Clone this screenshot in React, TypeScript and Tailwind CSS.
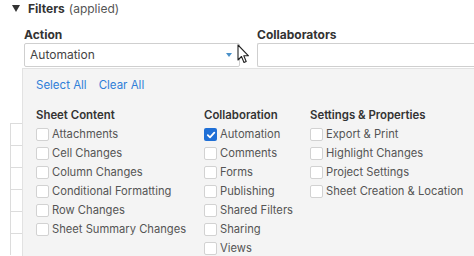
import React from "react";

const col1 = ["Attachments", "Cell Changes", "Column Changes", "Conditional Formatting", "Row Changes", "Sheet Summary Changes"];
const col2 = ["Automation", "Comments", "Forms", "Publishing", "Shared Filters", "Sharing", "Views"];
const col3 = ["Export & Print", "Highlight Changes", "Project Settings", "Sheet Creation & Location"];

function Box({ checked }: { checked?: boolean }) {
  if (checked) {
    return (
      <span className="w-[13px] h-[13px] rounded-[2px] bg-[#1f6fd6] flex items-center justify-center shrink-0">
        <svg width="10" height="10" viewBox="0 0 10 10"><path d="M1.8 5.2 L4 7.3 L8.3 2.6" stroke="white" strokeWidth="1.8" fill="none" strokeLinecap="round" strokeLinejoin="round" /></svg>
      </span>
    );
  }
  return <span className="w-[13px] h-[13px] rounded-[2px] border border-[#d2d2d2] bg-white shrink-0" />;
}

function Column({ title, items, checked = [] as string[], w }: { title: string; items: string[]; checked?: string[]; w: string }) {
  return (
    <div className={`flex flex-col shrink-0 ${w}`}>
      <div className="font-semibold text-[11.4px] text-[#333] h-[20px] leading-[20px]">{title}</div>
      {items.map((it) => (
        <div key={it} className="flex items-center gap-[3px] h-[19px]">
          <Box checked={checked.includes(it)} />
          <span className="text-[11.2px] text-[#555] whitespace-nowrap">{it}</span>
        </div>
      ))}
    </div>
  );
}

export default function App() {
  return (
    <div className="w-[474px] h-[256px] bg-white overflow-hidden relative" style={{ fontFamily: "Inter, 'Noto Sans', sans-serif" }}>
      <div className="flex items-center h-[18px] pl-[12px]">
        <svg width="8" height="7" viewBox="0 0 8 7" className="mt-[-2px]"><path d="M0 0 H8 L4 7 Z" fill="#333" /></svg>
        <span className="ml-[8px] font-bold text-[12px] text-[#333]">Filters</span>
        <span className="ml-[4px] text-[12px] text-[#555]">(applied)</span>
      </div>
      <div className="flex mt-[8px] pl-[24px] gap-[17px]">
        <div className="flex flex-col w-[216px] shrink-0">
          <div className="font-bold text-[12px] text-[#333] h-[17px] leading-[17px]">Action</div>
          <div className="h-[24px] border border-[#cfcfcf] rounded-[2px] flex items-center pl-[5px] pr-[7px] justify-between">
            <span className="text-[12px] text-[#444]">Automation</span>
            <svg width="6" height="4" viewBox="0 0 6 4"><path d="M0 0 H6 L3 4 Z" fill="#4a90c8" /></svg>
          </div>
        </div>
        <div className="flex flex-col flex-1">
          <div className="font-bold text-[12px] text-[#333] h-[17px] leading-[17px]">Collaborators</div>
          <div className="h-[24px] border border-[#cfcfcf] border-r-0 rounded-l-[2px]" />
        </div>
      </div>
      <div className="flex mt-[1px]">
        <div className="w-[22px] shrink-0 pl-[10px] pt-[55px] flex flex-col">
          {[0, 1, 2, 3, 4, 5].map((i) => (
            <div key={i} className="h-[22px] border-l border-t border-[#dcdcdc]" />
          ))}
        </div>
        <div className="flex-1 bg-[#f4f4f4] border-l border-t border-[#e2e2e2] pl-[13px] pt-[8px] h-[200px]">
          <div className="flex gap-[12px] text-[11.5px] text-[#2f7fd8] h-[16px] leading-[16px]">
            <span>Select All</span>
            <span>Clear All</span>
          </div>
          <div className="flex mt-[12px]">
            <Column title="Sheet Content" items={col1} w="w-[168px]" />
            <Column title="Collaboration" items={col2} checked={["Automation"]} w="w-[106px]" />
            <Column title="Settings & Properties" items={col3} w="w-[170px]" />
          </div>
        </div>
      </div>
      <svg className="absolute left-[237px] top-[44px]" width="13" height="20" viewBox="0 0 13 20">
        <path d="M1 1 L1 16 L4.5 12.5 L7 18.5 L9.2 17.5 L6.8 11.8 L11.5 11.8 Z" fill="white" stroke="#222" strokeWidth="1.1" strokeLinejoin="round" />
      </svg>
    </div>
  );
}
